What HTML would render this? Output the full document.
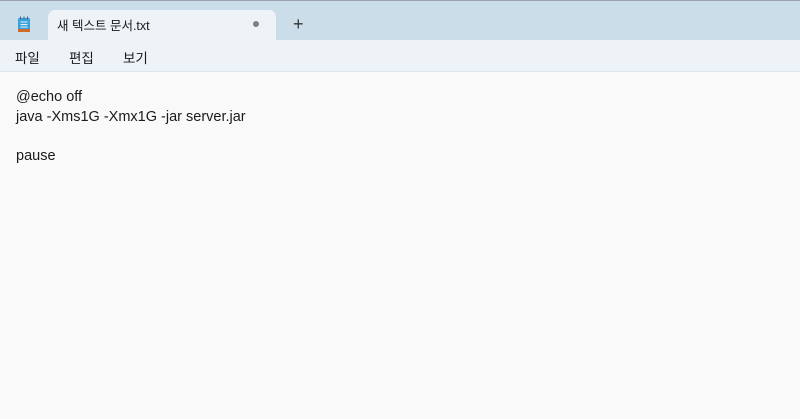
<!DOCTYPE html>
<html><head><meta charset="utf-8"><style>
body{margin:0;width:800px;height:419px;overflow:hidden;background:#f9f9f9;font-family:"Liberation Sans","Noto Sans CJK KR",sans-serif;position:relative}
.top{position:absolute;left:0;top:0;width:800px;height:1px;background:#9aa3ab}
.title{position:absolute;left:0;top:1px;width:800px;height:39px;background:#cbdde9}
.tab{position:absolute;left:48px;top:10px;width:228px;height:31px;background:#eef3f8;border-radius:7px 7px 0 0}
.tabt{position:absolute;left:57px;top:15px;font-size:12.5px;color:#1a1a1a}
.dot{position:absolute;left:253px;top:21px;width:6px;height:6px;border-radius:50%;background:#808080}
.plus{position:absolute;left:293px;top:14px;font-size:18px;color:#333}
.menu{position:absolute;left:0;top:40px;width:800px;height:31px;background:#eef3f8;border-bottom:1px solid #dde7ec}
.menu span{position:absolute;top:7px;font-size:13.5px;color:#1a1a1a}
.txt{position:absolute;left:16px;top:88px;font-size:14.5px;line-height:19.5px;color:#1a1a1a;white-space:pre}
</style></head><body>
<div class="top"></div>
<div class="title"></div>
<svg style="position:absolute;left:17px;top:16px" width="14" height="17" viewBox="0 0 14 17"><rect x="1" y="2" width="12" height="14" rx="1.5" fill="#3aa0d8"/><rect x="1" y="13" width="12" height="3" fill="#d06a2a"/><g stroke="#e8f4fb" stroke-width="1"><line x1="3.5" y1="6" x2="10.5" y2="6"/><line x1="3.5" y1="8.5" x2="10.5" y2="8.5"/><line x1="3.5" y1="11" x2="10.5" y2="11"/></g><g fill="#2b5f80"><rect x="3" y="0.5" width="1" height="2.5"/><rect x="6.5" y="0.5" width="1" height="2.5"/><rect x="10" y="0.5" width="1" height="2.5"/></g></svg>
<div class="tab"></div>
<div class="tabt">새 텍스트 문서.txt</div>
<div class="dot"></div>
<div class="plus">+</div>
<div class="menu"><span style="left:15px">파일</span><span style="left:69px">편집</span><span style="left:123px">보기</span></div>
<div class="txt">@echo off
java -Xms1G -Xmx1G -jar server.jar

pause</div>
</body></html>
